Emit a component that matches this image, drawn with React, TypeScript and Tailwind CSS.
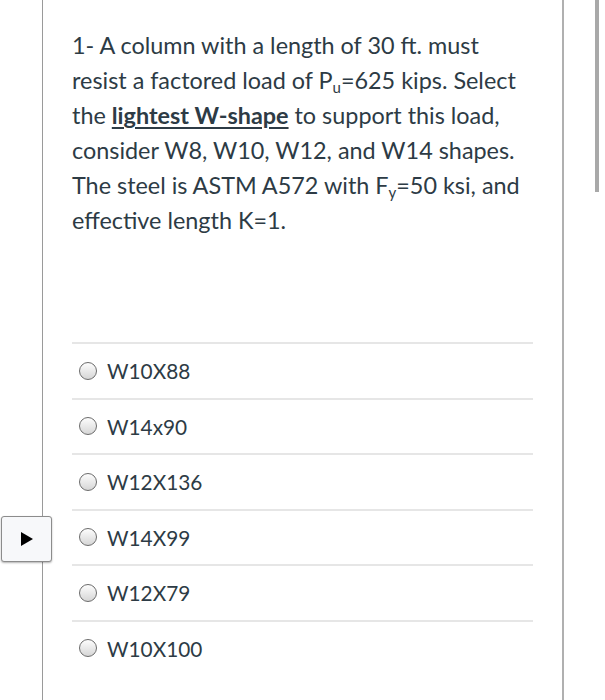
import React from "react";

const options = ["W10X88", "W14x90", "W12X136", "W14X99", "W12X79", "W10X100"];

const Radio = () => (
  <span className="inline-block w-[18px] h-[18px] rounded-full border border-[#6b6b6b] bg-gradient-to-b from-[#fdfdfd] to-[#d6d6d6] shrink-0" />
);

export default function App() {
  return (
    <div
      className="relative w-[605px] h-[700px] bg-white overflow-hidden text-[#2d3b45]"
      style={{ fontFamily: "Lato, 'Open Sans', sans-serif" }}
    >
      <div className="ml-[42px] w-[522px] h-full border-l border-[#9a9a9a] border-r-2 border-r-[#b0b0b0] px-[29px] pt-[28px]">
        <p className="text-[23.4px] leading-[35px]">
          1- A column with a length of 30 ft. must resist a factored load of P
          <sub className="text-[15px] leading-none">u</sub>=625 kips. Select the{" "}
          <strong className="font-bold underline underline-offset-[3px]">lightest W-shape</strong> to support this load,
          consider W8, W10, W12, and W14 shapes. The steel is ASTM A572 with F
          <sub className="text-[15px] leading-none">y</sub>=50 ksi, and effective length K=1.
        </p>

        <ul className="mt-[104px]">
          {options.map((o) => (
            <li
              key={o}
              className="flex items-center gap-[10px] h-[55.5px] border-t-2 border-[#e6e6e6] pl-[7px] text-[20.8px]"
            >
              <Radio />
              <span>{o}</span>
            </li>
          ))}
        </ul>
      </div>

      {/* scrollbar thumb */}
      <div className="absolute right-[6px] top-0 w-[4px] h-[192px] bg-[#a9a9a9]" />

      {/* flag marker */}
      <div className="absolute left-[1px] top-[516px] w-[51px] h-[46px] bg-[#f7f8fa] border border-[#8c8c8c] rounded-[3px] shadow-[0_1px_2px_rgba(0,0,0,0.3)] flex items-center justify-center">
        <svg width="14" height="16" viewBox="0 0 14 16">
          <path d="M1 1 L13 8 L1 15 Z" fill="#000" />
        </svg>
      </div>
    </div>
  );
}
